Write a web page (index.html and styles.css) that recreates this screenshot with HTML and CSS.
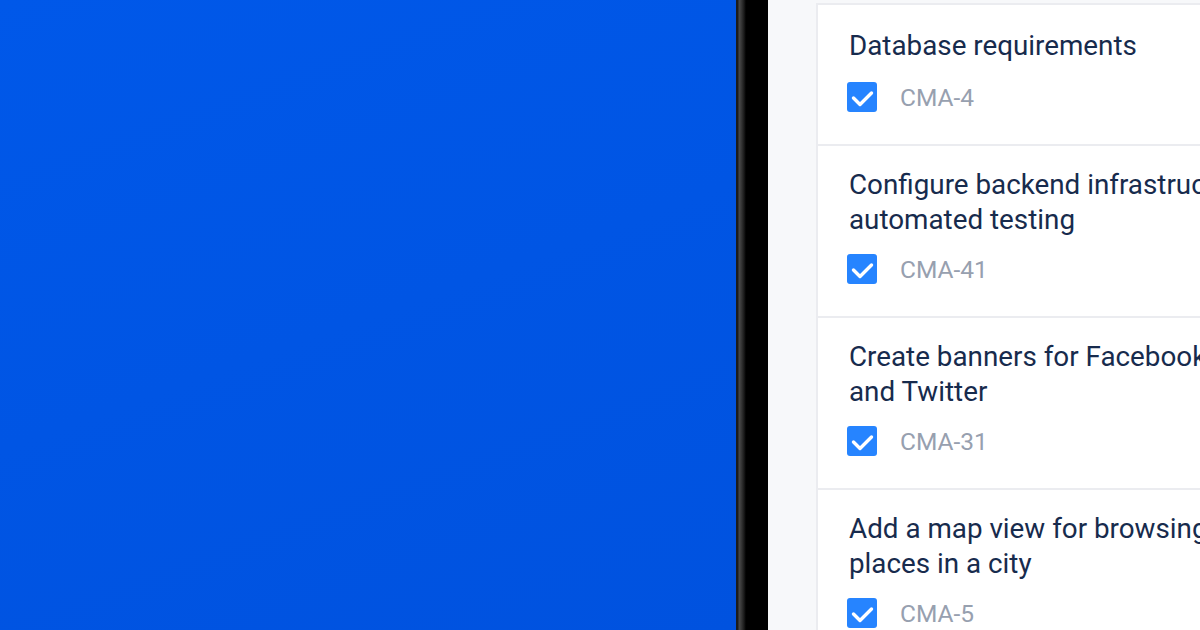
FILE: index.html
```html
<!DOCTYPE html>
<html lang="en">
<head>
  <meta charset="UTF-8" />
  <title>Issues</title>
  <link rel="stylesheet" href="styles.css">
</head>
<body>
  <div class="backdrop"></div>
  <div class="phone">
    <div class="screen">
      <div class="issues">
        <div class="issue">
          <div class="issue-title">Database requirements</div>
          <div class="issue-meta">
            <span class="check"><svg viewBox="0 0 30 30" width="30" height="30"><rect width="30" height="30" rx="3" fill="#2684ff"/><path d="M6.5 16l6.5 6.5 11.5-11.5" fill="none" stroke="#fff" stroke-width="3.4" stroke-linecap="round" stroke-linejoin="round"/></svg></span>
            <span class="issue-key">CMA-4</span>
          </div>
        </div>
        <div class="issue">
          <div class="issue-title">Configure backend infrastructure for<br>automated testing</div>
          <div class="issue-meta">
            <span class="check"><svg viewBox="0 0 30 30" width="30" height="30"><rect width="30" height="30" rx="3" fill="#2684ff"/><path d="M6.5 16l6.5 6.5 11.5-11.5" fill="none" stroke="#fff" stroke-width="3.4" stroke-linecap="round" stroke-linejoin="round"/></svg></span>
            <span class="issue-key">CMA-41</span>
          </div>
        </div>
        <div class="issue">
          <div class="issue-title">Create banners for Facebook, Instagram<br>and Twitter</div>
          <div class="issue-meta">
            <span class="check"><svg viewBox="0 0 30 30" width="30" height="30"><rect width="30" height="30" rx="3" fill="#2684ff"/><path d="M6.5 16l6.5 6.5 11.5-11.5" fill="none" stroke="#fff" stroke-width="3.4" stroke-linecap="round" stroke-linejoin="round"/></svg></span>
            <span class="issue-key">CMA-31</span>
          </div>
        </div>
        <div class="issue">
          <div class="issue-title">Add a map view for browsing nearby<br>places in a city</div>
          <div class="issue-meta">
            <span class="check"><svg viewBox="0 0 30 30" width="30" height="30"><rect width="30" height="30" rx="3" fill="#2684ff"/><path d="M6.5 16l6.5 6.5 11.5-11.5" fill="none" stroke="#fff" stroke-width="3.4" stroke-linecap="round" stroke-linejoin="round"/></svg></span>
            <span class="issue-key">CMA-5</span>
          </div>
        </div>
      </div>
    </div>
  </div>
</body>
</html>
```

FILE: styles.css
```css
*, *::before, *::after {
  box-sizing: border-box;
}
body {
  margin: 0;
  height: 630px;
  overflow: hidden;
  display: flex;
  font-family: Roboto, 'Liberation Sans', sans-serif;
  background: #0056e6;
}
.backdrop {
  width: 736px;
  flex-shrink: 0;
  background: linear-gradient(160deg, #0058e9, #0052df);
}
.phone {
  flex: 1;
  display: flex;
  padding-left: 32px;
  background: linear-gradient(to right, #1c1c1c 0, #1c1c1c 2px, #4a4a4a 3px, #3a3a3a 5px, #1a1a1a 8px, #000 10px, #000 100%);
  min-width: 0;
}
.screen {
  flex: 1;
  background: #f7f8fa;
  padding: 3px 0 0 48px;
  min-width: 0;
  overflow: hidden;
}
.issues {
  background: #fff;
  border-left: 2px solid #ebecf0;
  width: 600px;
}
.issue {
  padding: 21px 0 32px 31px;
  border-top: 2px solid #ebecf0;
  white-space: nowrap;
}
.issue:first-child {
  padding-top: 23px;
}
.issue:first-child .issue-meta {
  margin-top: 19px;
}
.issue-title {
  font-size: 27.8px;
  line-height: 35px;
  color: #172b4d;
}
.issue-meta {
  display: flex;
  align-items: center;
  gap: 23px;
  margin-top: 17px;
  height: 30px;
  margin-left: -2px;
}
.check {
  display: flex;
}
.issue-key {
  font-size: 24.5px;
  color: #97a0af;
}
```
